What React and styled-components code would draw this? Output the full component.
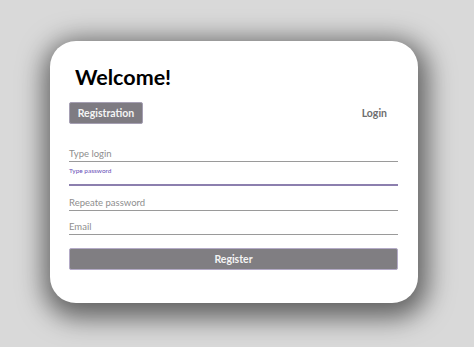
import styled, { createGlobalStyle } from "styled-components";

const GlobalStyle = createGlobalStyle`
  html, body {
    margin: 0;
    padding: 0;
    background: #d9d9d9;
    font-family: Lato, "Noto Sans", sans-serif;
  }
`;

const Page = styled.div`
  width: 474px;
  height: 347px;
  box-sizing: border-box;
  padding: 41px 0 0 50px;
  background: #d9d9d9;
  overflow: hidden;
`;

const Card = styled.div`
  width: 368px;
  height: 262px;
  box-sizing: border-box;
  padding: 22px 20px 0 19px;
  background: #fff;
  border-radius: 26px;
  box-shadow: 2px 7px 26px 8px rgba(0, 0, 0, 0.55);
  display: flex;
  flex-direction: column;
`;

const Title = styled.h1`
  margin: 0 0 0 6px;
  font-size: 21.5px;
  line-height: 28px;
  font-weight: 700;
  color: #000;
`;

const Tabs = styled.div`
  display: flex;
  align-items: center;
  justify-content: space-between;
  margin-top: 11px;
  padding-right: 11px;
`;

const Tab = styled.button`
  height: 22px;
  width: ${(p) => (p.$active ? "74px" : "auto")};
  padding: 0;
  border-radius: 2px;
  font-family: inherit;
  font-size: 10.5px;
  font-weight: 700;
  cursor: pointer;
  border: ${(p) => (p.$active ? "1px solid #a59fb3" : "none")};
  background: ${(p) => (p.$active ? "#7e7b82" : "transparent")};
  color: ${(p) => (p.$active ? "#f4f4f4" : "#6e6e6e")};
`;

const Form = styled.form`
  display: flex;
  flex-direction: column;
  margin-top: 13px;
`;

const Field = styled.label`
  display: flex;
  flex-direction: column;
  justify-content: flex-end;
  box-sizing: border-box;
  height: 24.5px;
  border-bottom: ${(p) => (p.$focus ? "2px solid #8c7fae" : "1px solid #9a9a9a")};
`;

const FloatLabel = styled.span`
  font-size: 6.5px;
  color: #6a4fb8;
  line-height: 8px;
  margin-bottom: 9px;
`;

const Placeholder = styled.span`
  font-size: 9.5px;
  line-height: 12px;
  color: #8e8e8e;
  padding-bottom: 1px;
`;

const Submit = styled.button`
  margin-top: 13px;
  height: 22px;
  border: 1px solid #b3aac6;
  border-radius: 2px;
  background: #807e82;
  color: #f4f4f4;
  font-family: inherit;
  font-size: 10.5px;
  font-weight: 700;
  cursor: pointer;
`;

export default function App() {
  return (
    <>
      <GlobalStyle />
      <Page>
        <Card>
          <Title>Welcome!</Title>
          <Tabs>
            <Tab $active type="button">Registration</Tab>
            <Tab type="button">Login</Tab>
          </Tabs>
          <Form onSubmit={(e) => e.preventDefault()}>
            <Field>
              <Placeholder>Type login</Placeholder>
            </Field>
            <Field $focus>
              <FloatLabel>Type password</FloatLabel>
            </Field>
            <Field>
              <Placeholder>Repeate password</Placeholder>
            </Field>
            <Field>
              <Placeholder>Email</Placeholder>
            </Field>
            <Submit type="submit">Register</Submit>
          </Form>
        </Card>
      </Page>
    </>
  );
}
